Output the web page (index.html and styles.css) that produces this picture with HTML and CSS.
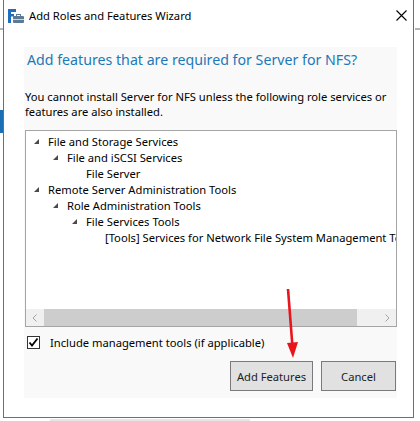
FILE: index.html
```html
<!DOCTYPE html>
<html>
<head>
<meta charset="utf-8">
<link rel="stylesheet" href="styles.css">
</head>
<body>
<div class="screen">
  <div class="deco deco-blue"></div>
  <div class="deco deco-tick-l"></div>
  <div class="deco deco-tick-r"></div>
  <div class="deco deco-bottom"></div>
  <div class="window">
    <div class="titlebar">
      <svg class="app-icon" width="16" height="14" viewBox="0 0 16 14">
        <rect x="0" y="0" width="3" height="14" fill="#1f6fc0"/>
        <rect x="0" y="0" width="8" height="3" fill="#1f6fc0"/>
        <rect x="0" y="5" width="6" height="2.5" fill="#1f6fc0"/>
        <rect x="5" y="7" width="11" height="7" rx="1" fill="#5d7a94"/>
        <rect x="8.5" y="5.5" width="4" height="2" fill="none" stroke="#5d7a94" stroke-width="1"/>
        <rect x="5" y="10" width="11" height="1" fill="#c9d6e2"/>
      </svg>
      <span class="title">Add Roles and Features Wizard</span>
      <svg class="close" width="11" height="11" viewBox="0 0 11 11">
        <path d="M0.5 0.5 L10.5 10.5 M10.5 0.5 L0.5 10.5" stroke="#000" stroke-width="1.1"/>
      </svg>
    </div>
    <div class="body">
      <div class="panel">
        <h1 class="heading">Add features that are required for Server for NFS?</h1>
        <p class="message">You cannot install Server for NFS unless the following role services or<br>features are also installed.</p>
        <div class="tree">
          <div class="rows">
            <div class="row lvl0"><span class="toggle"><svg width="5" height="5" viewBox="0 0 5 5"><path d="M5 0 L5 5 L0 5 Z" fill="#4a4a4a"/></svg></span>File and Storage Services</div>
            <div class="row lvl1"><span class="toggle"><svg width="5" height="5" viewBox="0 0 5 5"><path d="M5 0 L5 5 L0 5 Z" fill="#4a4a4a"/></svg></span>File and iSCSI Services</div>
            <div class="row lvl2"><span class="toggle"></span>File Server</div>
            <div class="row lvl0"><span class="toggle"><svg width="5" height="5" viewBox="0 0 5 5"><path d="M5 0 L5 5 L0 5 Z" fill="#4a4a4a"/></svg></span>Remote Server Administration Tools</div>
            <div class="row lvl1"><span class="toggle"><svg width="5" height="5" viewBox="0 0 5 5"><path d="M5 0 L5 5 L0 5 Z" fill="#4a4a4a"/></svg></span>Role Administration Tools</div>
            <div class="row lvl2"><span class="toggle"><svg width="5" height="5" viewBox="0 0 5 5"><path d="M5 0 L5 5 L0 5 Z" fill="#4a4a4a"/></svg></span>File Services Tools</div>
            <div class="row lvl3"><span class="toggle"></span>[Tools] Services for Network File System Management Tools</div>
          </div>
          <div class="hscroll">
            <span class="sarrow"><svg width="5" height="8" viewBox="0 0 5 8"><path d="M4.5 0.5 L1 4 L4.5 7.5" fill="none" stroke="#a3a3a3" stroke-width="1"/></svg></span>
            <div class="strack"><div class="sthumb"></div></div>
            <span class="sarrow"><svg width="5" height="8" viewBox="0 0 5 8"><path d="M0.5 0.5 L4 4 L0.5 7.5" fill="none" stroke="#a3a3a3" stroke-width="1"/></svg></span>
          </div>
        </div>
        <label class="check">
          <span class="box"><svg width="11" height="11" viewBox="0 0 11 11"><path d="M1.5 5.5 L4 8.5 L9.5 1.5" fill="none" stroke="#000" stroke-width="1.8"/></svg></span>
          <span class="check-label">Include management tools (if applicable)</span>
        </label>
        <div class="buttons">
          <button class="btn btn-add">Add Features</button>
          <button class="btn btn-cancel">Cancel</button>
        </div>
      </div>
    </div>
  </div>
  <svg class="annot" width="20" height="75" viewBox="0 0 20 75">
    <path d="M4 0 L8.5 58" stroke="#e8151c" stroke-width="2.6" fill="none"/>
    <path d="M3 54 L14 53 L9 69 Z" fill="#e8151c"/>
  </svg>
</div>
</body>
</html>
```

FILE: styles.css
```css
html, body {
  margin: 0;
  padding: 0;
  background: #ffffff;
}
.screen {
  position: relative;
  width: 420px;
  height: 421px;
  overflow: hidden;
  font-family: "Noto Sans", "Open Sans", sans-serif;
  font-size: 11.2px;
  color: #000;
}
.deco { position: absolute; }
.deco-blue { left: 0; top: 110px; width: 3px; height: 23px; background: #1a6fb5; }
.deco-tick-l { left: 0; top: 28px; width: 3px; height: 2px; background: #b5b5b5; }
.deco-tick-r { left: 415px; top: 28px; width: 5px; height: 2px; background: #b5b5b5; }
.deco-bottom { left: 50px; top: 419px; width: 200px; height: 2px; background: #e6e6e6; }

.window {
  position: relative;
  margin-left: 3px;
  width: 409px;
  height: 417px;
  border: 1px solid #6f6f6f;
  border-top: none;
  background: #ffffff;
  display: flex;
  flex-direction: column;
}
.titlebar {
  height: 30px;
  display: flex;
  align-items: center;
  padding-left: 4px;
  padding-top: 1px;
  box-sizing: border-box;
}
.app-icon { flex: none; margin-top: 1px; }
.title {
  margin-left: 5px;
  flex: 1;
}
.close { margin-right: 6px; }
.body {
  padding: 17px 16px 0 20px;
}
.panel {
  background: #f9f9f9;
  height: 351px;
  padding: 0 0 0 1px;
  display: flex;
  flex-direction: column;
}
.heading {
  margin: 2px 0 0 0;
  padding-left: 2px;
  font-weight: normal;
  font-size: 14.2px;
  line-height: 22px;
  color: #1d78b8;
  white-space: nowrap;
}
.message {
  margin: 18px 0 0 0;
  line-height: 15px;
  white-space: nowrap;
}
.tree {
  margin-top: 11px;
  height: 197px;
  box-sizing: border-box;
  border: 1px solid #a5a5a5;
  background: #fff;
  display: flex;
  flex-direction: column;
}
.rows {
  flex: 1;
  overflow: hidden;
  padding-top: 3px;
}
.row {
  height: 16px;
  line-height: 16px;
  white-space: nowrap;
  display: flex;
  align-items: center;
}
.toggle {
  width: 14px;
  flex: none;
  display: flex;
  align-items: center;
  margin-top: -1px;
}
.lvl0 { padding-left: 8px; }
.lvl1 { padding-left: 27px; }
.lvl2 { padding-left: 46px; }
.lvl3 { padding-left: 65px; }
.hscroll {
  height: 17px;
  display: flex;
  background: #f0f0f0;
}
.sarrow {
  width: 17px;
  display: flex;
  align-items: center;
  justify-content: center;
  flex: none;
}
.strack {
  flex: 1;
  display: flex;
  align-items: stretch;
  padding: 0 1px;
}
.sthumb {
  width: 313px;
  background: #cdcdcd;
}
.check {
  margin-top: 9px;
  margin-left: 2px;
  display: flex;
  align-items: center;
  height: 13px;
}
.box {
  width: 11px;
  height: 11px;
  border: 1px solid #333;
  background: #fff;
  display: flex;
}
.check-label { margin-left: 10px; }
.buttons {
  margin-top: 12px;
  display: flex;
  justify-content: flex-end;
  gap: 8px;
  padding-right: 1px;
}
.btn {
  height: 30px;
  box-sizing: border-box;
  border: 1px solid #7a7a7a;
  background: #e1e1e1;
  font-family: "Noto Sans", "Open Sans", sans-serif;
  font-size: 11.2px;
  color: #222;
  padding: 0;
}
.btn-add { width: 83px; }
.btn-cancel { width: 75px; }
.annot {
  position: absolute;
  left: 284px;
  top: 289px;
}
```
